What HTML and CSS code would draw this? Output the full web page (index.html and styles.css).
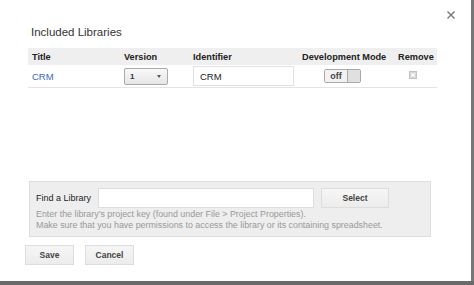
FILE: index.html
```html
<!DOCTYPE html>
<html>
<head>
<meta charset="utf-8">
<link rel="stylesheet" href="styles.css">
</head>
<body>
<div class="frame">
  <div class="dialog">
    <div class="top">
      <div class="title">Included Libraries</div>
      <svg class="close" width="8" height="8" viewBox="0 0 8 8"><path d="M0.5 0.5L7.5 7.5M7.5 0.5L0.5 7.5" stroke="#777" stroke-width="1.4"/></svg>
    </div>
    <div class="table">
      <div class="row head">
        <div class="cell c-title">Title</div>
        <div class="cell c-version">Version</div>
        <div class="cell c-id">Identifier</div>
        <div class="cell c-dev">Development Mode</div>
        <div class="cell c-rem">Remove</div>
      </div>
      <div class="row body">
        <div class="cell c-title"><a class="link">CRM</a></div>
        <div class="cell c-version"><div class="select"><span>1</span><span class="arrow"></span></div></div>
        <div class="cell c-id"><div class="input">CRM</div></div>
        <div class="cell c-dev"><div class="toggle"><span class="off">off</span><span class="knob"></span></div></div>
        <div class="cell c-rem"><svg class="xbox" width="8" height="8" viewBox="0 0 8 8"><rect x="0.5" y="0.5" width="7" height="7" fill="#d8d8d8" stroke="#c2c2c2"/><path d="M2.3 2.3L5.7 5.7M5.7 2.3L2.3 5.7" stroke="#fff" stroke-width="1.2"/></svg></div>
      </div>
    </div>
    <div class="spacer"></div>
    <div class="find">
      <div class="find-row">
        <span class="find-label">Find a Library</span>
        <div class="find-input"></div>
        <div class="btn select-btn">Select</div>
      </div>
      <div class="help">Enter the library’s project key (found under File &gt; Project Properties).<br>Make sure that you have permissions to access the library or its containing spreadsheet.</div>
    </div>
    <div class="actions">
      <div class="btn act">Save</div>
      <div class="btn act">Cancel</div>
    </div>
  </div>
  <div class="shadow-r"></div>
</div>
<div class="shadow-b"></div>
</body>
</html>
```
FILE: styles.css
```css
html, body { margin: 0; padding: 0; background: #fff; }
body { width: 474px; height: 285px; overflow: hidden; font-family: "Liberation Sans", Arial, sans-serif; color: #333; }
.frame { display: flex; height: 281px; }
.dialog { flex: 1; display: flex; flex-direction: column; padding: 0 0 0 28px; }
.shadow-r { width: 3px; background: #777; }
.shadow-b { height: 4px; background: #6a6a6a; }
.top { display: flex; justify-content: space-between; align-items: flex-start; height: 48px; }
.title { font-size: 11.5px; margin: 26px 0 0 3px; color: #333; }
.close { margin: 11px 16px 0 0; }
.table { width: 409px; }
.row { display: flex; align-items: center; }
.cell { box-sizing: border-box; flex-shrink: 0; display: flex; align-items: center; }
.head { height: 17px; background: #efefef; font-weight: bold; font-size: 9.2px; color: #222; }
.body { height: 22px; border-bottom: 1px solid #e4e4e4; font-size: 9.5px; }
.c-title { width: 96px; padding-left: 4px; }
.c-version { width: 69px; }
.c-id { width: 106px; }
.c-dev { width: 96px; }
.head .c-dev { padding-left: 3px; }
.body .c-dev { padding-left: 25px; }
.c-rem { width: 42px; }
.head .c-rem { padding-left: 3px; }
.body .c-rem { padding-left: 14px; }
.link { color: #3b64c4; }
.select { width: 44px; height: 17px; border: 1px solid #aaa; border-radius: 2px; background: linear-gradient(#f8f8f8, #e6e6e6); display: flex; align-items: center; justify-content: space-between; padding: 0 6px 0 5px; box-sizing: border-box; font-size: 8px; font-weight: bold; color: #333; }
.arrow { width: 0; height: 0; border-left: 2.5px solid transparent; border-right: 2.5px solid transparent; border-top: 3px solid #555; }
.input { width: 101px; height: 20px; border: 1px solid #e0e0e0; box-sizing: border-box; display: flex; align-items: center; padding-left: 6px; font-size: 9.5px; color: #222; }
.toggle { display: flex; width: 37px; height: 14px; border: 1px solid #aaa; border-radius: 2px; overflow: hidden; box-sizing: border-box; }
.off { width: 22px; background: #f2f2f2; font-size: 9px; font-weight: bold; color: #444; display: flex; align-items: center; justify-content: center; border-right: 1px solid #aaa; }
.knob { flex: 1; background: #e0e0e0; }
.xbox { margin-top: -3px; }
.spacer { height: 93px; }
.find { width: 402px; box-sizing: border-box; height: 56px; background: #eee; border: 1px solid #ddd; padding: 6px 0 0 6px; margin-left: 1px; }
.find-row { display: flex; align-items: center; }
.find-label { font-size: 9px; color: #222; width: 62px; flex-shrink: 0; }
.find-input { width: 216px; height: 20px; background: #fff; border: 1px solid #ddd; box-sizing: border-box; flex-shrink: 0; }
.btn { display: flex; align-items: center; justify-content: center; background: linear-gradient(#f6f6f6, #ececec); border: 1px solid #ddd; box-sizing: border-box; font-size: 8.5px; font-weight: bold; color: #444; flex-shrink: 0; }
.select-btn { width: 68px; height: 20px; margin-left: 7px; }
.help { font-size: 8.9px; color: #999; line-height: 11px; margin-top: 1px; }
.actions { display: flex; gap: 11px; margin: 8px 0 0 -3px; }
.act { width: 49px; height: 20px; }
```
